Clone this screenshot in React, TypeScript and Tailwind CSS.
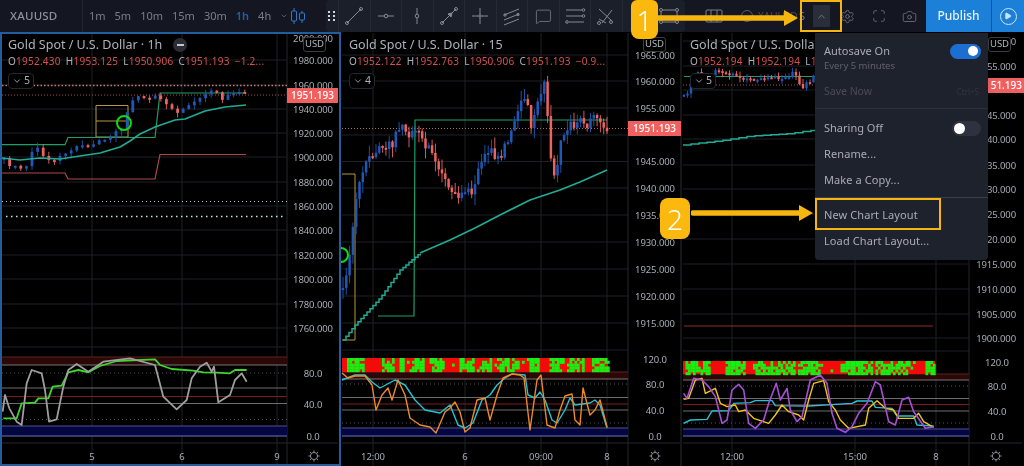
import { Camera, ChevronDown, ChevronUp, Maximize, MessageSquare, Play, Settings } from "lucide-react";

type Pt = [number, number];

const UI_FONT = "[font-family:'Noto_Sans',sans-serif]";
const BLUE = "#2058b8";
const RED = "#ec6462";

// small stable noise, so the chart is the same on every load
const rnd = (n: number) => {
  const v = Math.sin(n * 127.1 + 11.7) * 43758.5453;
  return v - Math.floor(v);
};

const line = (p: Pt[]) => p.map((a) => a.join(",")).join(" ");

const interp = (p: Pt[], x: number) => {
  for (let i = 1; i < p.length; i++) {
    if (x <= p[i][0]) {
      const t = (x - p[i - 1][0]) / (p[i][0] - p[i - 1][0] || 1);
      return p[i - 1][1] + (p[i][1] - p[i - 1][1]) * t;
    }
  }
  return p[p.length - 1][1];
};

// the stepped moving average
const stairs = (p: Pt[], step: number) => {
  const out: Pt[] = [];
  for (let x = p[0][0]; x <= p[p.length - 1][0]; x += step) {
    const y = interp(p, x);
    out.push([x, y], [x + step, y]);
  }
  return out;
};

// zoomed crop coordinates back to page coordinates
const fromCrop = (ox: number, a: number[][]): Pt[] => a.map(([x, y]) => [ox + x / 3, 340 + y / 3]);

function Candles({ path, step, w, amp, seed }: { path: Pt[]; step: number; w: number; amp: number; seed: number }) {
  const out = [];
  const end = path[path.length - 1][0];
  let prev = interp(path, path[0][0]);
  let i = 0;
  for (let x = path[0][0]; x <= end; x += step) {
    const close = interp(path, x) + (rnd(seed + i) - 0.5) * amp;
    const top = Math.min(prev, close);
    const bot = Math.max(prev, close);
    const color = close < prev ? BLUE : RED;
    out.push(
      <g key={i} stroke={color}>
        <line x1={x} x2={x} y1={top - rnd(seed + i + 40) * amp} y2={bot + rnd(seed + i + 80) * amp} strokeWidth={0.9} />
        <line x1={x} x2={x} y1={top} y2={Math.max(bot, top + 2)} strokeWidth={w} />
      </g>,
    );
    prev = close;
    i++;
  }
  return <g>{out}</g>;
}

function Heat({ x0, x1, y0, y1, greens, seed }: { x0: number; x1: number; y0: number; y1: number; greens: number[][]; seed: number }) {
  const cells = [];
  for (let x = x0; x < x1; x += 2.5) {
    for (let y = y0; y < y1 - 1; y += 2.8) {
      const base = greens.some(([a, b]) => x >= a && x <= b);
      const on = rnd(seed + x * 3.1 + y * 7.7) < (base ? 0.76 : 0.07);
      if (on) cells.push(<rect key={`${x}-${y}`} x={x} y={y} width={2.7} height={3} fill="#12f312" />);
    }
  }
  return (
    <g>
      <rect x={x0} y={y0} width={x1 - x0} height={y1 - y0} fill="#f50a0a" />
      {cells}
    </g>
  );
}

function AxisText({ x, y, end, children }: { x: number; y: number; end?: boolean; children: string }) {
  return (
    <text x={x} y={y + 3.6} textAnchor={end ? "end" : "middle"} className="fill-[#a9acb5] text-[9.5px] tracking-[-0.1px]">
      {children}
    </text>
  );
}

function Lower({ x0, x1, end, rows }: { x0: number; x1: number; end: number; rows: { top: number; bot: number; g1: number; mid: number; g2: number; dot: number; dot2: number; b: number } }) {
  return (
    <g fill="none">
      <rect x={x0} y={rows.top} width={x1 - x0} height={rows.bot - rows.top} fill="#2a0808" />
      <line x1={x0} x2={x1} y1={rows.top} y2={rows.top} stroke="#5d2222" />
      <line x1={x0} x2={x1} y1={rows.bot} y2={rows.bot} stroke="#7d7272" />
      <line x1={x0} x2={x1} y1={rows.g1} y2={rows.g1} stroke="#6d6d6d" />
      <line x1={x0} x2={x1} y1={rows.mid} y2={rows.mid} stroke="#7e1c1c" />
      <line x1={x0} x2={x1} y1={rows.g2} y2={rows.g2} stroke="#6d6d6d" />
      <line x1={x0} x2={x1} y1={rows.dot} y2={rows.dot} stroke="#555" strokeDasharray="1 3" />
      <line x1={x0} x2={x1} y1={rows.dot2} y2={rows.dot2} stroke="#555" strokeDasharray="1 3" />
      <rect x={x0} y={rows.b} width={x1 - x0} height={436 - rows.b} fill="#040640" />
      <line x1={x0} x2={x1} y1={rows.b} y2={rows.b} stroke="#4e5199" />
      <line x1={x0} x2={x1} y1={436} y2={436} stroke="#6d70c0" />
      <line x1={x0} x2={end} y1={443} y2={443} stroke="#23262e" />
    </g>
  );
}

function Grid({ x0, x1, ys, xs }: { x0: number; x1: number; ys: number[]; xs: number[] }) {
  return (
    <g stroke="#1d2027" strokeWidth={1}>
      {ys.map((y) => (
        <line key={y} x1={x0} x2={x1} y1={y} y2={y} />
      ))}
      {xs.map((x) => (
        <line key={x} x1={x} x2={x} y1={33} y2={466} />
      ))}
    </g>
  );
}

function GearMark({ x }: { x: number }) {
  return (
    <g stroke="#8a8d96" fill="none" strokeWidth={1}>
      <circle cx={x} cy={456} r={3.6} />
      {[0, 45, 90, 135, 180, 225, 270, 315].map((a) => (
        <line
          key={a}
          x1={x + Math.cos((a * Math.PI) / 180) * 3.6}
          y1={456 + Math.sin((a * Math.PI) / 180) * 3.6}
          x2={x + Math.cos((a * Math.PI) / 180) * 5.6}
          y2={456 + Math.sin((a * Math.PI) / 180) * 5.6}
        />
      ))}
    </g>
  );
}

function Legend({ title, o, h, l, c, chg, count, minus }: { title: string; o: string; h: string; l: string; c?: string; chg?: string; count: string; minus?: boolean }) {
  const val = "text-[#d8504e]";
  return (
    <div className="absolute left-2 top-[4px] text-[#aeb1ba]">
      <div className="flex h-[18px] items-center gap-2 text-[12.5px] whitespace-nowrap">
        <span>{title}</span>
        {minus && (
          <span className="ml-[3px] flex h-[14px] w-[14px] items-center justify-center rounded-full bg-[#2a2d35]">
            <span className="h-[2px] w-[7px] bg-[#c4c6cc]" />
          </span>
        )}
      </div>
      <div className="flex h-[14px] items-center gap-[5px] text-[10px] tracking-[0.25px] whitespace-nowrap">
        <span>O<span className={val}>{o}</span></span>
        <span>H<span className={val}>{h}</span></span>
        <span>L<span className={val}>{l}</span></span>
        {c && <span>C<span className={val}>{c}</span></span>}
        {chg && <span className={val}>{chg}</span>}
      </div>
      <div className="mt-[5px] flex h-[16px] w-[26px] items-center justify-center gap-[2px] rounded-sm border border-[#24272f] bg-black text-[10.5px]">
        <ChevronDown size={10} />
        {count}
      </div>
    </div>
  );
}

function UsdTag({ left }: { left: string }) {
  return (
    <div className={`absolute top-[5px] flex h-[15px] w-[23px] items-center justify-center rounded-[3px] border border-[#3a3d45] bg-black text-[9.5px] text-[#b2b5be] ${left}`}>
      USD
    </div>
  );
}

const P1_CANDLES: Pt[] = [[4,160],[15,167],[25,170],[30,150],[37,148],[42,153],[50,160],[55,160],[62,152],[70,150],[75,147],[90,146],[100,142],[105,140],[118,131],[125,122],[131,100],[137,97],[150,96],[158,98],[165,103],[175,110],[180,113],[190,105],[200,98],[210,93],[215,88],[220,100],[225,100],[230,94],[245,94]];
const P1_MA: Pt[] = [[2,158],[20,160],[40,158],[60,159],[80,156],[100,153],[120,147],[130,141],[140,134],[155,127],[175,120],[185,119],[205,111],[225,107],[246,105]];
const P1_GREEN = fromCrop(0, [[10,235],[15,235],[50,235],[65,190],[105,188],[115,175],[145,175],[158,140],[185,137],[205,97],[235,90],[265,97],[300,78],[350,63],[465,58],[480,75],[515,87],[580,92],[610,97],[650,98],[690,100],[705,90],[740,90]]);
const P1_GRAY = fromCrop(0, [[8,215],[15,165],[28,205],[50,245],[65,255],[80,130],[95,90],[125,100],[135,150],[147,245],[170,238],[190,140],[205,90],[230,72],[265,95],[310,65],[390,55],[465,75],[490,170],[530,208],[560,180],[575,115],[600,80],[620,68],[635,95],[642,80],[655,187],[690,165],[705,120],[725,100],[740,125]]);

const P2_CANDLES: Pt[] = [[343,290],[350,250],[358,180],[365,165],[370,158],[380,150],[393,142],[400,125],[405,128],[412,135],[420,130],[425,145],[430,150],[440,172],[450,190],[458,200],[465,195],[472,190],[480,160],[490,150],[497,162],[505,145],[515,125],[520,100],[527,105],[532,130],[538,105],[545,80],[550,150],[553,180],[556,175],[560,145],[568,125],[580,122],[585,128],[590,120],[592,110],[598,120],[607,128]];
const P2_MA_LOW: Pt[] = [[343,340],[355,325],[380,298],[400,270],[420,253]];
const P2_MA_HIGH: Pt[] = [[420,253],[450,240],[475,228],[500,215],[530,200],[545,195],[560,190],[580,182],[607,170]];
const P2_ORANGE: Pt[] = [[342,373],[348,378],[355,376],[365,376],[372,385],[376,410],[382,395],[388,388],[392,400],[398,380],[405,395],[410,418],[420,425],[430,427],[436,433],[445,412],[450,408],[455,402],[460,412],[465,432],[470,428],[477,400],[485,398],[490,420],[497,395],[503,378],[512,374],[520,375],[524,378],[530,430],[537,380],[541,375],[547,425],[555,428],[560,410],[565,396],[572,394],[575,420],[580,425],[583,388],[590,415],[595,410],[600,400],[607,427]];
const P2_CYAN: Pt[] = [[342,380],[355,375],[365,375],[372,382],[380,388],[395,380],[405,385],[415,400],[425,410],[440,413],[450,405],[458,425],[465,428],[473,423],[482,400],[490,395],[497,385],[505,378],[512,374],[525,375],[528,395],[535,398],[540,392],[545,400],[552,420],[557,423],[565,410],[570,398],[575,405],[590,403],[595,400],[600,405],[607,428]];

const P3_CANDLES: Pt[] = [[684,95],[688,92],[695,73],[705,75],[715,72],[725,72],[740,78],[750,80],[765,80],[780,77],[790,75],[795,70],[798,85],[803,88],[810,80],[815,75]];
const P3_MA: Pt[] = [[683,145],[700,143],[725,140],[750,136],[785,134],[815,130],[900,124],[935,118]];
const P3_PURPLE = fromCrop(512, [[515,160],[525,175],[545,115],[570,120],[590,140],[610,170],[630,250],[645,240],[660,150],[680,133],[695,150],[710,250],[730,265],[755,240],[770,190],[793,130],[805,180],[825,145],[835,210],[855,245],[870,230],[895,120],[925,105],[945,130],[960,220],[975,265],[1000,277],[1020,260],[1040,220],[1065,190],[1090,125],[1105,135],[1130,245],[1150,255],[1170,180],[1190,172],[1205,215],[1240,265],[1265,260]]);
const P3_YELLOW = fromCrop(512, [[515,178],[530,175],[550,120],[570,115],[580,160],[610,145],[625,190],[645,200],[670,195],[680,215],[700,210],[725,235],[770,250],[790,225],[810,195],[830,215],[860,225],[875,240],[890,180],[905,130],[935,122],[950,185],[970,210],[985,240],[1010,265],[1060,255],[1070,205],[1095,182],[1120,205],[1145,210],[1160,235],[1205,235],[1220,220],[1235,245],[1265,262]]);
const P3_CYAN = fromCrop(512, [[515,250],[535,240],[585,238],[600,213],[650,212],[665,190],[715,188],[730,182],[780,182],[790,197],[890,198],[1020,190],[1035,183],[1080,183],[1090,202],[1140,205],[1155,228],[1205,228],[1215,255],[1265,258]]);

function PaneOne() {
  const ticks = [60, 85, 109, 133, 157, 182, 206, 230, 255, 279, 304, 328];
  const labels = ["1980.000", "1960.000", "1940.000", "1920.000", "1900.000", "1880.000", "1860.000", "1840.000", "1820.000", "1800.000", "1780.000", "1760.000"];
  return (
    <div className="relative h-full w-[341px] shrink-0 bg-black">
      <svg viewBox="0 32 341 434" className={`block h-full w-full ${UI_FONT}`}>
        <Grid x0={2} x1={287} ys={[...ticks, 347]} xs={[92, 182, 277]} />
        <line x1={287} x2={287} y1={33} y2={466} stroke="#24272f" />
        <line x1={2} x2={287} y1={85.5} y2={85.5} stroke="#c77a78" strokeWidth={1.4} strokeDasharray="1.5 2" />
        <line x1={2} x2={287} y1={95} y2={95} stroke="#a34f4e" strokeDasharray="1 2" />
        <line x1={2} x2={287} y1={201.5} y2={201.5} stroke="#c9c9c9" strokeDasharray="1 3" />
        <line x1={6} x2={285} y1={216.5} y2={216.5} stroke="#bff0dc" strokeWidth={1.4} strokeDasharray="1.5 3.5" />
        <polyline fill="none" stroke="#b5993f" points="96,137 96,105.5 128,105.5 128,137 96,137" />
        <line x1={96} x2={128} y1={121} y2={121} stroke="#b5993f" />
        <polyline fill="none" stroke="#1f9d6d" strokeWidth={1.2} points="2,144.7 65,144.7 68,137.5 155,137.5 160,93 246,93" />
        <polyline fill="none" stroke="#b04a4a" strokeWidth={1.2} points="2,173 65,173 68,179 155,179 160,154.5 246,154.5" />
        <Candles path={P1_CANDLES} step={5.6} w={2.8} amp={5} seed={3} />
        <polyline fill="none" stroke="#22ab94" strokeWidth={1.6} strokeLinejoin="round" points={line(P1_MA)} />
        <circle cx={124} cy={123} r={7} fill="none" stroke="#12d812" strokeWidth={2} />
        <Lower x0={2} x1={287} end={338} rows={{ top: 357, bot: 365, g1: 388, mid: 396.5, g2: 403.5, dot: 373, dot2: 419.5, b: 426 }} />
        <polyline fill="none" stroke="#3fd62d" strokeWidth={1.8} strokeLinejoin="round" points={line(P1_GREEN)} />
        <polyline fill="none" stroke="#9e9e9e" strokeWidth={1.8} strokeLinejoin="round" points={line(P1_GRAY)} />
        <AxisText x={313} y={38}>2000.000</AxisText>
        {ticks.map((y, i) => (
          <AxisText key={y} x={313} y={y}>{labels[i]}</AxisText>
        ))}
        <AxisText x={313} y={373}>80.0</AxisText>
        <AxisText x={313} y={404}>40.0</AxisText>
        <AxisText x={313} y={436}>0.0</AxisText>
        <AxisText x={92} y={456}>5</AxisText>
        <AxisText x={182} y={456}>6</AxisText>
        <AxisText x={277} y={456}>9</AxisText>
        <GearMark x={314} />
      </svg>
      <div className="absolute inset-0 border-2 border-[#245d9e]" />
      <Legend title="Gold Spot / U.S. Dollar · 1h" o="1952.430" h="1953.125" l="1950.906" c="1951.193" chg="−1.2..." count="5" minus />
      <UsdTag left="left-[303px]" />
      <div className="absolute left-[287px] top-[56px] flex h-[15px] w-[51px] items-center justify-center bg-[#f0605f] text-[10px] font-medium text-white">1951.193</div>
    </div>
  );
}

function PaneTwo() {
  const ticks = [55, 81, 108, 161.5, 188, 215, 242, 269, 296, 323];
  const labels = ["1965.000", "1960.000", "1955.000", "1945.000", "1940.000", "1935.000", "1930.000", "1925.000", "1920.000", "1915.000"];
  return (
    <div className="relative h-full w-[341px] shrink-0 bg-black">
      <svg viewBox="341 32 341 434" className={`block h-full w-full ${UI_FONT}`}>
        <Grid x0={342} x1={628} ys={[...ticks, 135, 350]} xs={[373, 465, 541, 607]} />
        <line x1={628} x2={628} y1={33} y2={466} stroke="#24272f" />
        <line x1={681} x2={681} y1={33} y2={466} stroke="#2a2d35" />
        <line x1={342} x2={628} y1={128.5} y2={128.5} stroke="#b06b69" strokeDasharray="1 2" />
        <polyline fill="none" stroke="#b5993f" points="342,174 355,174 355,340 342,340" />
        <polyline fill="none" stroke="#1f9d6d" strokeWidth={1.2} points="378,316 414,316 415,120 607,120" />
        <Candles path={P2_CANDLES} step={3.3} w={2.5} amp={11} seed={9} />
        <polyline fill="none" stroke="#22ab94" strokeWidth={1.5} points={line(stairs(P2_MA_LOW, 3))} />
        <polyline fill="none" stroke="#22ab94" strokeWidth={1.6} strokeLinejoin="round" points={line(P2_MA_HIGH)} />
        <circle cx={341} cy={255} r={7} fill="none" stroke="#12d812" strokeWidth={2} />
        <Lower x0={342} x1={628} end={680} rows={{ top: 372, bot: 379, g1: 397.5, mid: 404, g2: 410, dot: 384, dot2: 423, b: 428 }} />
        <Heat x0={342} x1={608} y0={358} y1={372} seed={5} greens={[[347,362],[380,392],[398,404],[412,424],[432,444],[458,472],[480,490],[498,519],[529,539],[549,562],[569,582],[590,607]]} />
        <polyline fill="none" stroke="#27c3d3" strokeWidth={1.4} strokeLinejoin="round" points={line(P2_CYAN)} />
        <polyline fill="none" stroke="#ec8a2b" strokeWidth={1.4} strokeLinejoin="round" points={line(P2_ORANGE)} />
        {ticks.map((y, i) => (
          <AxisText key={y} x={655} y={y}>{labels[i]}</AxisText>
        ))}
        <AxisText x={655} y={359}>120.0</AxisText>
        <AxisText x={655} y={384}>80.0</AxisText>
        <AxisText x={655} y={410}>40.0</AxisText>
        <AxisText x={655} y={436}>0.0</AxisText>
        <AxisText x={373} y={456}>12:00</AxisText>
        <AxisText x={465} y={456}>6</AxisText>
        <AxisText x={541} y={456}>09:00</AxisText>
        <AxisText x={607} y={456}>8</AxisText>
        <GearMark x={655} />
      </svg>
      <Legend title="Gold Spot / U.S. Dollar · 15" o="1952.122" h="1952.763" l="1950.906" c="1951.193" chg="−0.9..." count="4" />
      <UsdTag left="left-[302px]" />
      <div className="absolute left-[287px] top-[89px] flex h-[15px] w-[53px] items-center justify-center bg-[#f0605f] text-[10px] font-medium text-white">1951.193</div>
    </div>
  );
}

function PaneThree() {
  const ticks = [41, 66, 90, 115, 139, 165, 189, 214, 239, 264, 289, 314, 338];
  // the open menu hides the left part of the upper labels
  const cut: [number, string][] = [[66, "55.000"], [115, "45.000"], [139, "40.000"], [165, "35.000"], [189, "30.000"], [214, "25.000"], [239, "20.000"]];
  const full: [number, string][] = [[264, "1915.000"], [289, "1910.000"], [314, "1905.000"], [338, "1900.000"]];
  return (
    <div className="relative h-full w-[342px] shrink-0 bg-black">
      <svg viewBox="682 32 342 434" className={`block h-full w-full ${UI_FONT}`}>
        <Grid x0={683} x1={969} ys={[...ticks, 351]} xs={[732, 855, 936]} />
        <line x1={969} x2={969} y1={33} y2={466} stroke="#24272f" />
        <line x1={683} x2={815} y1={85} y2={85} stroke="#a34f4e" strokeDasharray="1 2" />
        <line x1={684} x2={815} y1={76.5} y2={76.5} stroke="#1f9d6d" strokeWidth={1.2} />
        <Candles path={P3_CANDLES} step={3.5} w={2.4} amp={5} seed={21} />
        <polyline fill="none" stroke="#22ab94" strokeWidth={1.5} points={line(stairs(P3_MA, 8))} />
        <line x1={684} x2={933} y1={326} y2={326} stroke="#8a2f2f" />
        <Lower x0={683} x1={969} end={1022} rows={{ top: 374, bot: 380, g1: 398.5, mid: 404.5, g2: 411, dot: 386, dot2: 423, b: 429 }} />
        <Heat x0={683} x1={935} y0={361} y1={374} seed={13} greens={[[684,709],[725,745],[754,795],[800,818],[839,872],[875,908],[925,935]]} />
        <polyline fill="none" stroke="#27c3d3" strokeWidth={1.4} strokeLinejoin="round" points={line(P3_CYAN)} />
        <polyline fill="none" stroke="#f0c419" strokeWidth={1.4} strokeLinejoin="round" points={line(P3_YELLOW)} />
        <polyline fill="none" stroke="#a84fd8" strokeWidth={1.6} strokeLinejoin="round" points={line(P3_PURPLE)} />
        <AxisText x={1016} y={41} end>00</AxisText>
        {cut.map(([y, t]) => (
          <AxisText key={y} x={1016} y={y} end>{t}</AxisText>
        ))}
        {full.map(([y, t]) => (
          <AxisText key={y} x={1016} y={y} end>{t}</AxisText>
        ))}
        <AxisText x={997} y={362}>120.0</AxisText>
        <AxisText x={997} y={386}>80.0</AxisText>
        <AxisText x={997} y={411}>40.0</AxisText>
        <AxisText x={997} y={436}>0.0</AxisText>
        <AxisText x={732} y={456}>12:00</AxisText>
        <AxisText x={855} y={456}>15:00</AxisText>
        <AxisText x={936} y={456}>8</AxisText>
        <GearMark x={996} />
      </svg>
      <Legend title="Gold Spot / U.S. Dolla" o="1952.194" h="1952.194" l="19" count="5" />
      <UsdTag left="left-[306px]" />
      <div className="absolute left-[306px] top-[46px] flex h-[15px] w-[36px] items-center justify-end bg-[#f0605f] pr-[2px] text-[10px] font-medium text-white">51.193</div>
    </div>
  );
}

function Tool({ children }: { children: React.ReactNode }) {
  return <div className="flex h-full w-[31.5px] shrink-0 items-center justify-center border-l border-[#262a35]">{children}</div>;
}

function DrawTools() {
  const s = { stroke: "#868993", fill: "none", strokeWidth: 1 };
  return (
    <div className="flex h-full w-[359px] shrink-0 items-center rounded-sm bg-[#1b1f2a]">
      <div className="grid h-full w-[12px] shrink-0 grid-cols-2 content-center justify-center gap-[2px] px-[2px]">
        {[0, 1, 2, 3, 4, 5].map((i) => (
          <span key={i} className="h-[2px] w-[2px] bg-[#d5d6da]" />
        ))}
      </div>
      <Tool><svg width="20" height="20" {...s}><path d="M3 17 17 3" /><circle cx="3" cy="17" r="1.5" /><circle cx="17" cy="3" r="1.5" /></svg></Tool>
      <Tool><svg width="20" height="20" {...s}><path d="M2 10h16" /><circle cx="10" cy="10" r="1.8" fill="#1b1f2a" /></svg></Tool>
      <Tool><svg width="20" height="20" {...s}><path d="M10 2v16" /><circle cx="10" cy="10" r="1.8" fill="#1b1f2a" /></svg></Tool>
      <Tool><svg width="20" height="20" {...s}><path d="M3 17 17 3" /><circle cx="3" cy="17" r="1.5" /><circle cx="17" cy="3" r="1.5" /><path d="m9 8 3 3 1-4z" fill="#868993" /></svg></Tool>
      <Tool><svg width="20" height="20" {...s}><path d="M2 10h16M10 2v16" /><circle cx="10" cy="10" r="1.2" fill="#1b1f2a" /></svg></Tool>
      <Tool><svg width="20" height="20" {...s}><path d="M2 9 17 3M2 14 17 8M2 19 17 13" /><circle cx="3" cy="9" r="1.2" /><circle cx="16" cy="8.5" r="1.2" /></svg></Tool>
      <Tool><MessageSquare size={17} strokeWidth={1} color="#868993" /></Tool>
      <Tool><svg width="22" height="20" {...s}><path d="M2 4h16M2 10h16M5 16h15" /><circle cx="19.5" cy="4" r="1.3" /><circle cx="19.5" cy="10" r="1.3" /><circle cx="3" cy="16" r="1.3" /></svg></Tool>
      <Tool><svg width="20" height="20" {...s}><path d="M3 3 16 15M16 4 6 17M3 13l7 4" /><circle cx="3" cy="17" r="1.5" /><circle cx="15" cy="16" r="1.5" /></svg></Tool>
      <Tool><svg width="20" height="20" {...s}><path d="M3 17 16 4" /></svg></Tool>
      <Tool><svg width="22" height="18" {...s}><rect x="3" y="3" width="16" height="12" /><circle cx="3" cy="3" r="1.5" fill="#1b1f2a" /><circle cx="19" cy="3" r="1.5" fill="#1b1f2a" /><circle cx="3" cy="15" r="1.5" fill="#1b1f2a" /><circle cx="19" cy="15" r="1.5" fill="#1b1f2a" /></svg></Tool>
    </div>
  );
}

function TopBar() {
  const frames = ["1m", "5m", "10m", "15m", "30m", "1h", "4h"];
  return (
    <div className="relative z-10 flex h-[32px] items-center bg-[#141722] text-[#7b7e88]">
      <div className="flex h-full w-[83px] shrink-0 items-center border-r border-[#23262f] pl-[10px] text-[11.5px] font-medium tracking-[0.2px] text-[#8e919a]">XAUUSD</div>
      <div className="flex w-[205px] shrink-0 items-center gap-[9px] pl-[6px] text-[11px]">
        {frames.map((f) => (
          <span key={f} className={f === "1h" ? "font-semibold text-[#1d5fb0]" : ""}>{f}</span>
        ))}
        <ChevronDown size={10} />
      </div>
      <svg width="20" height="20" className="mr-[18px] shrink-0" stroke="#2a7ad4" fill="none">
        <path d="M6 2v16M14 5v12" />
        <rect x="3.5" y="5" width="5" height="10" rx="1" fill="#141722" />
        <rect x="11.5" y="7" width="5" height="7" rx="1" fill="#141722" />
      </svg>
      <DrawTools />
      <div className="flex w-[48px] shrink-0 justify-center pl-[10px]">
        <svg width="18" height="14" stroke="#7b7e88" fill="none"><rect x="1" y="1" width="16" height="12" rx="1" /><path d="M6 1v12M12 1v12" /></svg>
      </div>
      <div className="flex flex-1 items-center gap-[5px] pl-[8px] text-[10px] text-[#4a4d56]">
        <span className="h-[12px] w-[12px] rounded-full border border-[#5a5d66]" />
        XAUUSD
      </div>
      <span className="mr-[8px] text-[11px]">S</span>
      <div className="flex h-[22px] w-[17px] shrink-0 items-center justify-center bg-[#2a2e39]"><ChevronUp size={11} /></div>
      <div className="flex w-[34px] shrink-0 justify-center"><Settings size={15} strokeWidth={1.2} /></div>
      <div className="flex w-[29px] shrink-0 justify-center"><Maximize size={14} strokeWidth={1.2} /></div>
      <div className="flex w-[33px] shrink-0 justify-center"><Camera size={15} strokeWidth={1.2} /></div>
      <div className="flex h-full w-[65px] shrink-0 items-center justify-center bg-[#1c7fd8] text-[12px] font-medium text-[#e6f1fb]">Publish</div>
      <div className="flex h-full w-[33px] shrink-0 items-center justify-center border-l border-[#14588f] bg-[#1c7fd8]">
        <span className="flex h-[17px] w-[17px] items-center justify-center rounded-full border border-[#cfe4f7]">
          <Play size={8} fill="#cfe4f7" color="#cfe4f7" />
        </span>
      </div>
    </div>
  );
}

function Item({ children }: { children: React.ReactNode }) {
  return <div className="flex h-[26px] items-center px-[9px] text-[11px] tracking-[0.1px] text-[#a9acb5]">{children}</div>;
}

function SaveMenu() {
  return (
    <div className={`absolute left-[815px] top-[33px] z-10 flex h-[227px] w-[173px] flex-col rounded-b-sm bg-[#1e222d] pt-[10px] shadow-lg ${UI_FONT}`}>
      <div className="flex h-[16px] items-center justify-between pl-[9px] pr-[7px] text-[11px] text-[#a9acb5]">
        Autosave On
        <span className="flex h-[15px] w-[31px] items-center justify-end rounded-full bg-[#1c6fd0] pr-[3px]">
          <span className="h-[10px] w-[10px] rounded-full bg-white" />
        </span>
      </div>
      <div className="h-[19px] pl-[9px] text-[9.5px] text-[#5f626c]">Every 5 minutes</div>
      <div className="flex h-[28px] items-center justify-between pl-[9px] pr-[9px] text-[10.5px] text-[#4a4d56]">
        Save Now
        <span className="text-[8px] text-[#33363f]">Ctrl+S</span>
      </div>
      <div className="mb-[6px] mt-[2px] h-px bg-[#2e323d]" />
      <div className="flex h-[26px] items-center justify-between pl-[9px] pr-[7px] text-[11px] text-[#a9acb5]">
        Sharing Off
        <span className="flex h-[15px] w-[29px] items-center rounded-full bg-[#2e3240] pl-[2px]">
          <span className="h-[11px] w-[11px] rounded-full bg-white" />
        </span>
      </div>
      <Item>Rename...</Item>
      <Item>Make a Copy...</Item>
      <div className="my-[4px] h-px bg-[#3a3e4a]" />
      <Item>New Chart Layout</Item>
      <Item>Load Chart Layout...</Item>
    </div>
  );
}

function Arrow({ className, w }: { className: string; w: number }) {
  return (
    <svg width={w} height="18" className={`absolute z-20 ${className}`}>
      <path d={`M2 9 H${w - 12}`} stroke="#f7b50f" strokeWidth="5.5" strokeLinecap="round" />
      <path d={`M${w - 14} 1 L${w} 9 L${w - 14} 17 Z`} fill="#f7b50f" />
    </svg>
  );
}

function Callouts() {
  return (
    <>
      <div className="absolute left-[800px] top-0 z-20 h-[32px] w-[42px] border-[2px] border-[#f7b50f]" />
      <Arrow className="left-[656px] top-[9px]" w={142} />
      <div className="absolute left-[631px] top-0 z-20 flex h-[39px] w-[27px] items-center justify-center rounded-b-lg rounded-t-md bg-[#fbb80f] text-[28px] font-light text-white">1</div>
      <div className="absolute left-[815px] top-[198px] z-20 h-[32px] w-[126px] border-[2px] border-[#f7b50f]" />
      <Arrow className="left-[691px] top-[204px]" w={122} />
      <div className="absolute left-[660px] top-[198px] z-20 flex h-[41px] w-[30px] items-center justify-center rounded-lg bg-[#fbb80f] text-[28px] font-light text-white">2</div>
    </>
  );
}

export default function App() {
  return (
    <div className={`relative h-[466px] w-[1024px] overflow-hidden bg-black blur-[0.35px] ${UI_FONT}`}>
      <TopBar />
      <div className="flex h-[434px]">
        <PaneOne />
        <PaneTwo />
        <PaneThree />
      </div>
      <SaveMenu />
      <Callouts />
    </div>
  );
}
